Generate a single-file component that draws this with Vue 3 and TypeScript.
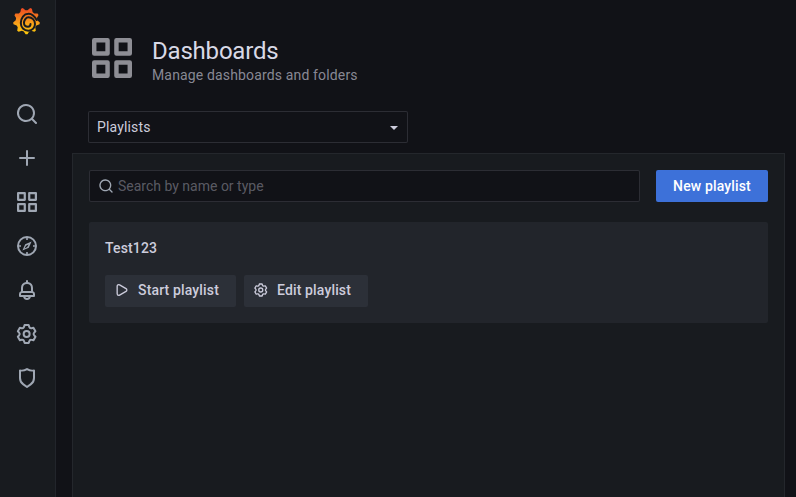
<script setup lang="ts">
const P = {
  search: 'M21.71,20.29,18,16.61A9,9,0,1,0,16.61,18l3.68,3.68a1,1,0,0,0,1.42,0A1,1,0,0,0,21.71,20.29ZM11,18a7,7,0,1,1,7-7A7,7,0,0,1,11,18Z',
  plus: 'M19,11H13V5a1,1,0,0,0-2,0v6H5a1,1,0,0,0,0,2h6v6a1,1,0,0,0,2,0V13h6a1,1,0,0,0,0-2Z',
  apps: 'M10,3H4A1,1,0,0,0,3,4v6a1,1,0,0,0,1,1h6a1,1,0,0,0,1-1V4A1,1,0,0,0,10,3ZM9,9H5V5H9Zm11-6H14a1,1,0,0,0-1,1v6a1,1,0,0,0,1,1h6a1,1,0,0,0,1-1V4A1,1,0,0,0,20,3ZM19,9H15V5h4ZM10,13H4a1,1,0,0,0-1,1v6a1,1,0,0,0,1,1h6a1,1,0,0,0,1-1V14A1,1,0,0,0,10,13ZM9,19H5V15H9Zm11-6H14a1,1,0,0,0-1,1v6a1,1,0,0,0,1,1h6a1,1,0,0,0,1-1V14A1,1,0,0,0,20,13Zm-1,6H15V15h4Z',
  compass: 'M12,2A10,10,0,1,0,22,12,10,10,0,0,0,12,2Zm0,18a8,8,0,1,1,8-8A8,8,0,0,1,12,20ZM16.6,7.4,10.2,10.2,7.4,16.6l6.4-2.8ZM11,11.8l2.6-1.4-1.4,2.6-2.6,1.4ZM11.2,4h1.6V6H11.2ZM11.2,18h1.6v2H11.2ZM4,11.2H6v1.6H4ZM18,11.2h2v1.6H18Z',
  bell: 'M18,13.18V10a6,6,0,0,0-5-5.91V3a1,1,0,0,0-2,0V4.09A6,6,0,0,0,6,10v3.18A3,3,0,0,0,4,16v2a1,1,0,0,0,1,1H8.14a4,4,0,0,0,7.72,0H19a1,1,0,0,0,1-1V16A3,3,0,0,0,18,13.18ZM8,10a4,4,0,0,1,8,0v3H8Zm4,10a2,2,0,0,1-1.72-1h3.44A2,2,0,0,1,12,20Zm6-3H6V16a1,1,0,0,1,1-1H17a1,1,0,0,1,1,1Z',
  cog: 'M19.9,12.66a1,1,0,0,1,0-1.32L21.18,9.9a1,1,0,0,0,.12-1.17l-2-3.46a1,1,0,0,0-1.07-.48l-1.88.38a1,1,0,0,1-1.15-.66l-.61-1.83A1,1,0,0,0,13.64,2h-4a1,1,0,0,0-1,.68L8.08,4.51a1,1,0,0,1-1.15.66L5,4.79A1,1,0,0,0,4,5.27L2,8.73A1,1,0,0,0,2.1,9.9l1.27,1.44a1,1,0,0,1,0,1.32L2.1,14.1A1,1,0,0,0,2,15.27l2,3.46a1,1,0,0,0,1.07.48l1.88-.38a1,1,0,0,1,1.15.66l.61,1.83a1,1,0,0,0,1,.68h4a1,1,0,0,0,.95-.68l.61-1.83a1,1,0,0,1,1.15-.66l1.88.38a1,1,0,0,0,1.07-.48l2-3.46a1,1,0,0,0-.12-1.17ZM18.41,14l.8.9-1.28,2.22-1.18-.24a3,3,0,0,0-3.45,2L12.92,20H10.36L10,18.86a3,3,0,0,0-3.45-2l-1.18.24L4.07,14.89l.8-.9a3,3,0,0,0,0-4l-.8-.9L5.35,6.89l1.18.24a3,3,0,0,0,3.45-2L10.36,4h2.56l.38,1.14a3,3,0,0,0,3.45,2l1.18-.24,1.28,2.22-.8.9A3,3,0,0,0,18.41,14ZM11.64,8a4,4,0,1,0,4,4A4,4,0,0,0,11.64,8Zm0,6a2,2,0,1,1,2-2A2,2,0,0,1,11.64,14Z',
  shield: 'M19.63,3.65a1,1,0,0,0-.84-.2,8,8,0,0,1-6.22-1.27,1,1,0,0,0-1.14,0A8,8,0,0,1,5.21,3.45a1,1,0,0,0-.84.2A1,1,0,0,0,4,4.43v7.45a9,9,0,0,0,3.77,7.33l3.65,2.6a1,1,0,0,0,1.16,0l3.65-2.6A9,9,0,0,0,20,11.88V4.43A1,1,0,0,0,19.63,3.65ZM18,11.88a7,7,0,0,1-2.93,5.7L12,19.77,8.93,17.58A7,7,0,0,1,6,11.88V5.58a10,10,0,0,0,6-1.39,10,10,0,0,0,6,1.39Z',
  play: 'M18.54,9,8.88,3.46a3.42,3.42,0,0,0-5.13,3V17.58A3.42,3.42,0,0,0,7.17,21a3.43,3.43,0,0,0,1.71-.46L18.54,15a3.42,3.42,0,0,0,0-5.92Zm-1,4.19L7.88,18.81a1.44,1.44,0,0,1-1.42,0,1.42,1.42,0,0,1-.71-1.23V6.42a1.42,1.42,0,0,1,.71-1.23A1.51,1.51,0,0,1,7.17,5a1.54,1.54,0,0,1,.71.19l9.66,5.58a1.42,1.42,0,0,1,0,2.46Z',
}
interface NavItem { d: string; box: string; size: number }
const nav: NavItem[] = [
  { d: P.search, box: '0 0 24 24', size: 24 },
  { d: P.plus, box: '0 0 24 24', size: 24 },
  { d: P.apps, box: '3 3 18 18', size: 20 },
  { d: P.compass, box: '0 0 24 24', size: 24 },
  { d: P.bell, box: '0 0 24 24', size: 24 },
  { d: P.cog, box: '0 0 24 24', size: 24 },
  { d: P.shield, box: '0 0 24 24', size: 24 },
]

// Gear silhouette of the logo: nine teeth around the centre.
function gearPath(cx: number, cy: number, inner: number, outer: number, teeth: number): string {
  const pts: string[] = []
  const step = (Math.PI * 2) / teeth
  for (let i = 0; i < teeth; i++) {
    const a = -Math.PI / 2 - 0.35 + i * step
    const corners: [number, number][] = [
      [a - step * 0.36, inner],
      [a - step * 0.1, outer],
      [a + step * 0.1, outer],
      [a + step * 0.36, inner],
    ]
    for (const [ang, r] of corners) {
      pts.push(`${(cx + Math.cos(ang) * r).toFixed(2)} ${(cy + Math.sin(ang) * r).toFixed(2)}`)
    }
  }
  return `M${pts.join('L')}Z`
}
const gear = gearPath(13.5, 14, 10.8, 13.4, 9)
</script>

<template>
  <div class="root">
    <aside class="side">
      <svg class="logo" viewBox="0 0 27 28" width="27" height="28">
        <defs>
          <linearGradient id="lg" x1="0" y1="1" x2="0" y2="0">
            <stop offset="0" stop-color="#fbca0a" />
            <stop offset="0.4" stop-color="#f9a51a" />
            <stop offset="1" stop-color="#ee4722" />
          </linearGradient>
        </defs>
        <path fill="url(#lg)" :d="gear" />
        <path fill="none" stroke="#181b1f" stroke-width="2" stroke-linecap="round" d="M23.7 13C21 8.5 18 6.5 15.3 6.8 11 6.8 7.8 11 7.8 16 7.8 20.5 11 23.7 15.3 23.7 19.5 23.7 22 20.5 22 17 22 13 19 10.3 15.5 10.3 13 10.3 11 13 11 16 11 18.5 13 19.7 15 19.7 16.5 19.7 17.5 18.5 17.5 17" />
      </svg>
      <nav class="nav">
        <span v-for="(item, i) in nav" :key="i" class="nav-item">
          <svg :viewBox="item.box" :width="item.size" :height="item.size"><path :d="item.d" /></svg>
        </span>
      </nav>
    </aside>
    <main class="main">
      <header class="head">
        <svg class="head-icon" viewBox="3 3 18 18" width="40" height="40"><path :d="P.apps" /></svg>
        <div class="head-text">
          <h1>Dashboards</h1>
          <p>Manage dashboards and folders</p>
        </div>
      </header>
      <div class="select">
        <span>Playlists</span>
        <span class="caret"></span>
      </div>
      <section class="panel">
        <div class="bar">
          <div class="search">
            <svg viewBox="0 0 24 24" width="16" height="16"><path :d="P.search" /></svg>
            <span>Search by name or type</span>
          </div>
          <button class="btn primary">New playlist</button>
        </div>
        <article class="card">
          <h2>Test123</h2>
          <div class="actions">
            <button class="btn secondary"><svg viewBox="0 0 24 24" width="16" height="16"><path :d="P.play" /></svg>Start playlist</button>
            <button class="btn secondary"><svg viewBox="0 0 24 24" width="16" height="16"><path :d="P.cog" /></svg>Edit playlist</button>
          </div>
        </article>
      </section>
    </main>
  </div>
</template>

<style>
html, body { margin: 0; background: #111217; overflow: hidden; }
</style>

<style scoped>
.root {
  display: flex;
  width: 796px;
  height: 497px;
  overflow: hidden;
  background: #111217;
  color: #ccccdc;
  font-family: Roboto, "Liberation Sans", sans-serif;
  font-size: 14px;
  letter-spacing: 0.15px;
}
.side {
  width: 55px;
  flex: none;
  box-sizing: content-box;
  background: #181b1f;
  border-right: 1px solid #22252b;
  display: flex;
  flex-direction: column;
  align-items: flex-start;
}
.logo { margin: 7px 0 0 13px; display: block; flex: none; }
.nav { margin: 57px 0 0 15px; display: flex; flex-direction: column; }
.nav-item { width: 24px; height: 44px; display: flex; align-items: center; justify-content: center; }
.nav-item svg { fill: #9fa7b3; display: block; }
.main { flex: 1; min-width: 0; padding: 0 11px 0 16px; }
.head { display: flex; align-items: flex-start; margin: 38px 0 33px 20px; height: 40px; }
.head-icon { fill: #8e8e95; flex: none; display: block; }
.head-text { margin: -1px 0 0 20px; }
h1 { margin: 0; font-size: 24px; font-weight: 400; line-height: 28px; color: #d8d9e6; letter-spacing: -0.2px; }
p { margin: 1px 0 0; font-size: 14px; line-height: 18px; color: rgba(204, 204, 220, 0.65); }
.select {
  margin-left: 16px;
  width: 320px;
  height: 32px;
  box-sizing: border-box;
  background: #111217;
  border: 1px solid rgba(204, 204, 220, 0.15);
  border-radius: 2px;
  padding: 0 9px 0 8px;
  display: flex;
  align-items: center;
  justify-content: space-between;
  color: #ccccdc;
}
.caret { width: 0; height: 0; border-left: 4px solid transparent; border-right: 4px solid transparent; border-top: 4px solid #ccccdc; margin-top: 1px; }
.panel {
  margin-top: 10px;
  height: 400px;
  box-sizing: border-box;
  background: #181b1f;
  border: 1px solid rgba(204, 204, 220, 0.07);
  padding: 16px;
}
.bar { display: flex; gap: 16px; }
.search {
  flex: 1;
  height: 32px;
  box-sizing: border-box;
  background: #111217;
  border: 1px solid rgba(204, 204, 220, 0.15);
  border-radius: 2px;
  display: flex;
  align-items: center;
  padding-left: 8px;
  gap: 4px;
  color: rgba(204, 204, 220, 0.4);
  letter-spacing: 0;
}
.search svg { fill: #9fa7b3; display: block; flex: none; }
.btn {
  height: 32px;
  border: 0;
  border-radius: 2px;
  font: inherit;
  font-weight: 500;
  letter-spacing: inherit;
  display: inline-flex;
  align-items: center;
}
.primary { width: 112px; justify-content: center; background: #3d71d9; color: #fff; flex: none; padding: 0; }
.card { margin-top: 20px; background: #22252b; border-radius: 2px; padding: 16px; height: 101px; box-sizing: border-box; }
h2 { margin: 0; font-size: 14px; font-weight: 500; line-height: 20px; color: #ccccdc; }
.actions { display: flex; gap: 8px; margin-top: 17px; }
.secondary { background: #2c3038; color: #ccccdc; padding: 0 17px 2px 9px; gap: 8px; }
.secondary svg { fill: #ccccdc; display: block; flex: none; }
</style>
